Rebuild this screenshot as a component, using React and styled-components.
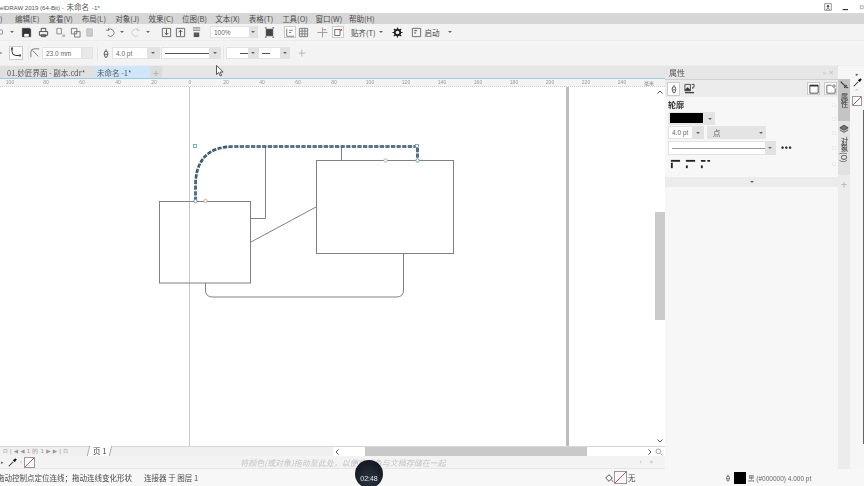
import React from 'react';
import styled, { createGlobalStyle } from 'styled-components';

const GlobalStyle = createGlobalStyle`
  html, body { margin: 0; padding: 0; background: #fff; }
  body { font-family: "Noto Sans CJK SC", "Noto Sans", "Liberation Sans", sans-serif; color: #4a4a4a; }
  * { box-sizing: border-box; }
`;

const Frame = styled.div`
  position: relative;
  width: 864px;
  height: 486px;
  overflow: hidden;
  display: flex;
  flex-direction: column;
  filter: blur(0.35px);
`;

const TitleBar = styled.div`
  height: 13px;
  background: #fff;
  display: flex;
  align-items: center;
  font-size: 8px;
  color: #555;
  white-space: nowrap;
`;
const TitleText = styled.span`
  flex: 1;
  font-family: "Liberation Sans", "Noto Sans CJK SC", sans-serif;
  font-size: 6.1px;
`;
const TitleName = styled.span`
  font-family: "Noto Sans CJK SC", sans-serif;
  font-size: 7.5px;
  margin: 0 3px 0 1px;
`;
const WinBtn = styled.span`
  width: ${p => p.$w}px;
  display: flex;
  justify-content: center;
  align-items: center;
  color: #333;
`;

const MenuBar = styled.div`
  height: 11px;
  background: #d6d6d6;
  display: flex;
  align-items: center;
  font-size: 7.5px;
  color: #4c4c4c;
  white-space: nowrap;
`;
const MenuItem = styled.span`
  width: 33.4px;
  flex: none;
  &:first-child { width: 15px; }
`;

const Toolbar = styled.div`
  height: ${p => p.$h}px;
  background: #f3f3f3;
  border-bottom: 1px solid #ececec;
  display: flex;
  align-items: center;
  flex: none;
`;
const Tool = styled.span`
  flex: none;
  margin-left: ${p => p.$ml || 0}px;
  width: ${p => p.$w || 12}px;
  height: ${p => p.$hh || 12}px;
  display: flex;
  align-items: center;
  justify-content: center;
  background: ${p => (p.$on ? '#fff' : 'transparent')};
  border: ${p => (p.$on ? '1px solid #ccc' : 'none')};
`;
const Caret = styled.span`
  flex: none;
  margin-left: ${p => p.$ml || 0}px;
  width: 0;
  height: 0;
  border-left: 2px solid transparent;
  border-right: 2px solid transparent;
  border-top: 2px solid #666;
`;
const Field = styled.div`
  flex: none;
  margin-left: ${p => p.$ml || 0}px;
  width: ${p => p.$w}px;
  height: ${p => p.$h || 12}px;
  background: ${p => p.$bg || '#fff'};
  border: 1px solid #e2e2e2;
  display: flex;
  align-items: center;
  font-family: "Liberation Sans", sans-serif;
  font-size: 6.5px;
  color: #666;
  padding-left: 3px;
  position: relative;
`;
const DropBtn = styled.span`
  position: absolute;
  right: 0;
  top: 0;
  bottom: 0;
  width: ${p => p.$w || 9}px;
  background: #e2e2e2;
  display: flex;
  align-items: center;
  justify-content: center;
`;
const LineSample = styled.span`
  display: block;
  width: ${p => p.$w}px;
  margin-left: ${p => p.$ml || 0}px;
  height: 1px;
  background: ${p => p.$c || '#555'};
`;
const BarLabel = styled.span`
  flex: none;
  margin-left: ${p => p.$ml || 0}px;
  font-size: 7.5px;
  color: #444;
`;
const Sep = styled.span`
  flex: none;
  width: 1px;
  height: 14px;
  margin-left: ${p => p.$ml || 0}px;
  background: #e6e6e6;
`;

const Body = styled.div`
  flex: 1;
  display: flex;
  min-height: 0;
`;
const Workspace = styled.div`
  width: 665px;
  flex: none;
  display: flex;
  flex-direction: column;
`;
const TabRow = styled.div`
  height: 13px;
  background: #e6e6e6;
  border-bottom: 1px solid #9fcbe0;
  display: flex;
  align-items: stretch;
  font-size: 7.5px;
  flex: none;
`;
const DocTab = styled.span`
  display: flex;
  align-items: center;
  width: ${p => p.$w}px;
  padding-left: ${p => p.$pl}px;
  background: ${p => (p.$active ? '#cfe5fa' : '#e0e0e0')};
  color: ${p => (p.$active ? '#5a5a5a' : '#555')};
  white-space: nowrap;
`;
const AddTab = styled.span`
  width: 12px;
  display: flex;
  align-items: center;
  justify-content: center;
  background: #dcdcdc;
  color: #aaa;
  font-size: 10px;
`;
const Ruler = styled.div`
  height: 8px;
  background: #f4f4f4;
  display: flex;
  flex: none;
  overflow: hidden;
  border-bottom: 1px dotted #d0d0d0;
`;
const RulerMark = styled.span`
  flex: none;
  width: 36px;
  font-family: "Liberation Sans", sans-serif;
  font-size: 5px;
  line-height: 7px;
  color: #999;
  text-align: center;
  &:first-child { margin-left: -8px; }
`;
const RulerUnit = styled.span`
  flex: none;
  margin-left: 4px;
  font-size: 5px;
  line-height: 7px;
  color: #888;
`;
const CanvasRow = styled.div`
  flex: 1;
  display: flex;
  min-height: 0;
`;
const Canvas = styled.div`
  position: relative;
  flex: 1;
  background: #fff;
  overflow: hidden;
`;
const Drawing = styled.svg`
  position: absolute;
  left: 0;
  top: 0;
`;
const VScroll = styled.div`
  width: 10px;
  flex: none;
  display: flex;
  flex-direction: column;
  align-items: stretch;
  background: #fff;
  padding: 3px 0;
`;
const VThumb = styled.div`
  height: 108px;
  margin-top: 118px;
  background: #cbcbcb;
  margin-bottom: auto;
`;
const ScrollArrow = styled.svg`
  display: block;
  margin: 0 auto;
  flex: none;
`;
const PageRow = styled.div`
  height: 10px;
  flex: none;
  display: flex;
  align-items: center;
  background: #f0f0f0;
  border-top: 1px solid #d8d8d8;
  font-size: 7px;
  color: #777;
`;
const PageNav = styled.span`
  width: 88px;
  flex: none;
  padding-left: 3px;
  letter-spacing: 2.2px;
  font-family: "DejaVu Sans", sans-serif;
  font-size: 5.5px;
  white-space: nowrap;
  color: #999;
`;
const PageTab = styled.span`
  flex: none;
  width: 23px;
  height: 10px;
  margin-top: -1px;
  background: #fff;
  border-left: 1px solid #aaa;
  border-right: 1px solid #aaa;
  transform: skewX(-14deg);
  text-align: center;
  font-size: 7.5px;
  line-height: 10px;
  color: #444;
`;
const PageTabLabel = styled.span`
  display: inline-block;
  transform: skewX(14deg);
`;
const PageGap = styled.span`
  flex: none;
  width: 222px;
`;
const HScroll = styled.div`
  flex: 1;
  height: 9px;
  background: #fff;
  display: flex;
  align-items: center;
`;
const HThumb = styled.span`
  width: 222px;
  height: 9px;
  margin-left: 26px;
  background: #c9c9c9;
`;
const HEnd = styled.span`
  margin-left: auto;
  display: flex;
  align-items: center;
  gap: 3px;
  padding-right: 2px;
`;
const ColorRow = styled.div`
  height: 13px;
  flex: none;
  display: flex;
  align-items: center;
  background: #f3f3f3;
  border-bottom: 1px solid #e6e6e6;
`;
const Hint = styled.span`
  margin-left: 205px;
  font-size: 8px;
  font-style: italic;
  color: #c4c4c4;
  white-space: nowrap;
  width: 396px;
`;
const Chevron = styled.span`
  flex: none;
  margin-left: ${p => p.$ml || 0}px;
  font-family: "DejaVu Sans", sans-serif;
  font-size: ${p => p.$fs || 7}px;
  line-height: ${p => p.$lh || 8}px;
  color: ${p => p.$c || '#bbb'};
`;
const NoneSwatch = styled.span`
  flex: none;
  margin-left: ${p => p.$ml || 0}px;
  width: ${p => p.$s}px;
  height: ${p => p.$s}px;
  border: 1px solid #999;
  background: linear-gradient(to top left, #fff 46%, #c9505a 46%, #c9505a 54%, #fff 54%);
`;

const Docker = styled.div`
  width: 173px;
  flex: none;
  background: #f7f7f7;
  display: flex;
  flex-direction: column;
`;
const DockHead = styled.div`
  height: 13px;
  background: #e6e6e6;
  display: flex;
  align-items: center;
  justify-content: space-between;
  padding: 0 2px 0 4px;
  font-size: 8px;
  color: #555;
`;
const DockHeadBtns = styled.span`
  color: #c0c0c0;
  font-family: "DejaVu Sans", sans-serif;
  font-size: 6.5px;
  letter-spacing: 2px;
`;
const DockTabs = styled.div`
  height: 18px;
  background: #ececec;
  border-top: 1px solid #cfcfcf;
  display: flex;
  align-items: center;
  padding: 0 0 0 2px;
`;
const DockSection = styled.div`
  display: flex;
  align-items: center;
  font-size: 8px;
  font-weight: 700;
  color: #333;
  margin: 2px 0 0 3px;
  height: 12px;
  line-height: 12px;
`;
const DockRow = styled.div`
  display: flex;
  align-items: center;
  margin: ${p => p.$mt}px 0 0 3px;
`;
const RowMark = styled.span`
  flex: none;
  margin: 0 2px 0 auto;
  width: 4px;
  height: 4px;
  border: 1px solid #ededed;
`;
const ColorPick = styled.span`
  width: 36px;
  height: 13px;
  background: #e8e8e8;
  padding: 1px 2px;
  display: block;
  flex: none;
`;
const ColorFill = styled.span`
  display: block;
  width: 33px;
  height: 10px;
  background: #000;
`;
const GreyDrop = styled.span`
  flex: none;
  width: ${p => p.$w || 11}px;
  height: 13px;
  margin-left: ${p => p.$ml || 0}px;
  background: #e4e4e4;
  display: flex;
  align-items: center;
  justify-content: ${p => (p.$w ? 'space-between' : 'center')};
  padding: ${p => (p.$w ? '0 3px 0 6px' : '0')};
  font-size: 7.5px;
  color: #666;
`;
const Dots = styled.span`
  margin-left: 5px;
  font-weight: 700;
  font-size: 9px;
  line-height: 8px;
  letter-spacing: 0.6px;
  color: #333;
  font-family: "Liberation Sans", sans-serif;
`;
const Collapse = styled.div`
  height: 10px;
  margin-top: 7px;
  background: #ececec;
  display: flex;
  align-items: center;
  justify-content: center;
`;

const TabStrip = styled.div`
  width: 12px;
  flex: none;
  background: #ececec;
  display: flex;
  flex-direction: column;
  align-items: center;
`;
const StripHead = styled.div`
  width: 12px;
  height: 13px;
  flex: none;
  background: #f6f6f6;
`;
const StripTab = styled.div`
  width: 12px;
  height: ${p => p.$h}px;
  background: ${p => (p.$on ? '#c4c4c4' : '#e2e2e2')};
  display: flex;
  flex-direction: column;
  align-items: center;
  padding-top: ${p => p.$pt || 0}px;
`;
const StripLabel = styled.span`
  writing-mode: vertical-rl;
  font-size: 7.5px;
  line-height: 12px;
  color: #333;
  white-space: nowrap;
  margin-top: 3px;
`;
const StripPlus = styled.span`
  font-size: 11px;
  line-height: 12px;
  margin-top: 3px;
  color: #b5b5b5;
`;
const Palette = styled.div`
  position: relative;
  width: 14px;
  flex: none;
  background: #f6f6f6;
  display: flex;
  flex-direction: column;
  align-items: center;
  padding-top: 5px;
  &::after {
    content: '';
    position: absolute;
    right: 0;
    top: 44px;
    bottom: 25px;
    width: 1px;
    background: #666;
  }
`;

const StatusBar = styled.div`
  height: 17px;
  flex: none;
  background: #f7f7f7;
  display: flex;
  align-items: center;
  font-size: 7.5px;
  color: #4a4a4a;
  white-space: nowrap;
`;
const StatusText = styled.span`
  flex: none;
  width: ${p => p.$w}px;
  margin-left: ${p => p.$ml || 0}px;
`;
const StatusSwatch = styled.span`
  flex: none;
  width: 12px;
  height: 12px;
  margin-left: 2px;
  background: #000;
`;
const StatusInfo = styled.span`
  margin-left: 2px;
  font-family: "Liberation Sans", "Noto Sans CJK SC", sans-serif;
  font-size: 6.5px;
  color: #666;
`;

const Timer = styled.div`
  position: absolute;
  left: 355px;
  top: 460px;
  width: 28px;
  height: 28px;
  border-radius: 50%;
  background: radial-gradient(circle at 50% 70%, #2c3442, #151a24 70%);
  color: #dfe4ea;
  font-family: "Liberation Sans", sans-serif;
  font-size: 7px;
  text-align: center;
  line-height: 38px;
`;
const Cursor = styled.svg`
  position: absolute;
  left: 216px;
  top: 65px;
`;

const Ico = ({ s = 11, children }) => (
  <svg width={s} height={s} viewBox="0 0 12 12" fill="none" stroke="#444" strokeWidth="1">
    {children}
  </svg>
);

const Pen = ({ s = 11 }) => (
  <Ico s={s}>
    <path d="M6 1v2M4.5 3.5h3l.8 3-1.3 4h-2l-1.3-4z" />
    <path d="M4.2 7h3.6" />
  </Ico>
);
const Dropper = () => (
  <Ico s={9}>
    <path d="M1 11l6-6" stroke="#333" strokeWidth="1.4" />
    <path d="M7 3l2 2 2-3-1-1z" fill="#111" stroke="#111" />
  </Ico>
);
const Down = () => <Caret />;

const rulerMarks = [100, 80, 60, 40, 20, 0, 20, 40, 60, 80, 100, 120, 140, 160, 180, 200, 220, 240];
const menus = [')', '编辑(E)', '查看(V)', '布局(L)', '对象(J)', '效果(C)', '位图(B)', '文本(X)', '表格(T)', '工具(O)', '窗口(W)', '帮助(H)'];

const StandardBar = () => (
  <Toolbar $h={17}>
    <Tool $w={6}><Ico s={10}><path d="M-3 2h7l1 1v7h-8z" /></Ico></Tool>
    <Caret $ml={4} />
    <Tool $ml={6}><Ico><path d="M1.5 1.5h8l1 1v8h-9z" fill="#333" /><path d="M3.5 7.5h5v3h-5z" fill="#fff" stroke="none" /></Ico></Tool>
    <Tool $ml={5}><Ico><path d="M3.5 5V1.5h5V5M1.5 5h9v4h-9zM3.5 8.5h5v2h-5z" /></Ico></Tool>
    <Tool $ml={5}><Ico><path d="M2 1.5h5v6H2z" stroke="#888" /><path d="M8 8h3v3H8z" fill="#bbb" stroke="none" /></Ico></Tool>
    <Tool $ml={3}><Ico><path d="M1.5 1.5h6v6h-6zM5 5h6v6H5z" stroke="#777" /></Ico></Tool>
    <Tool $ml={3}><Ico><path d="M2 2h6v8H2z" fill="#ccc" stroke="#bbb" /></Ico></Tool>
    <Tool $ml={8}><Ico><path d="M3 3.5A4 4 0 1 1 3 9" stroke="#777" /><path d="M1 3.5h3V1" stroke="#777" /></Ico></Tool>
    <Caret $ml={4} />
    <Tool $ml={5}><Ico><path d="M9 3.5A4 4 0 1 0 9 9" stroke="#ccc" /><path d="M11 3.5H8V1" stroke="#ccc" /></Ico></Tool>
    <Caret $ml={5} />
    <Tool $ml={10}><Ico><path d="M1.5 1.5h9v9h-9z" stroke="#666" /><path d="M6 2.5v6M4 6.5l2 2 2-2" /></Ico></Tool>
    <Tool $ml={2}><Ico><path d="M1.5 1.5h9v9h-9z" stroke="#666" /><path d="M6 9.5v-6M4 5.5l2-2 2 2" /></Ico></Tool>
    <Tool $ml={4}><Ico><path d="M2 1h8M2 3.5h8" stroke="#666" /><path d="M3 6h6v5H3z" fill="#555" stroke="none" /></Ico></Tool>
    <Field $ml={8} $w={48} $h={12}>100%<DropBtn $w={8}><Down /></DropBtn></Field>
    <Tool $ml={5}><Ico><path d="M2.5 2.5h7v7h-7z" fill="#444" /><path d="M1 1h2M9 1h2M1 11h2M9 11h2" /></Ico></Tool>
    <Tool $ml={9} $on><Ico s={9}><path d="M1 1v10h10M4 3h5M4 6h3" stroke="#555" /></Ico></Tool>
    <Tool $ml={1}><Ico><path d="M1.5 1.5h9v9h-9zM1.5 4.5h9M1.5 7.5h9M4.5 1.5v9M7.5 1.5v9" stroke="#777" /></Ico></Tool>
    <Tool $ml={7}><Ico><path d="M6 .5v11M.5 6h11" stroke="#999" /><path d="M7 3h3" stroke="#c66" /></Ico></Tool>
    <Tool $ml={4} $on><Ico s={9}><path d="M1 2h7v8H1z" /><path d="M8 1l3 3M11 1L8 4" stroke="#c33" /></Ico></Tool>
    <BarLabel $ml={7}>贴齐(T)</BarLabel>
    <Caret $ml={3} />
    <Tool $ml={9}><Ico><circle cx="6" cy="6" r="3" strokeWidth="2" stroke="#222" /><path d="M6 .5v2M6 9.5v2M.5 6h2M9.5 6h2M2 2l1.4 1.4M8.6 8.6L10 10M10 2L8.6 3.4M3.4 8.6L2 10" stroke="#222" strokeWidth="1.2" /></Ico></Tool>
    <Tool $ml={7}><Ico><path d="M1.5 1.5h9v9h-9z" stroke="#666" /><path d="M3.5 4h3M3.5 6.5h2" /></Ico></Tool>
    <BarLabel $ml={2}>启动</BarLabel>
    <Caret $ml={8} />
  </Toolbar>
);

const PropertyBar = () => (
  <Toolbar $h={25}>
    <Tool $w={4}><Ico s={6}><path d="M0 6h5" strokeWidth="3" stroke="#555" /></Ico></Tool>
    <Tool $ml={5} $w={14} $hh={14} $on><Ico s={12}><path d="M2 1.5v3q0 4 4 4h3" stroke="#333" /><path d="M1 .5h2v2H1zM9 7.5h2v2H9z" fill="#357" stroke="none" /></Ico></Tool>
    <Sep $ml={5} />
    <Tool $ml={1} $w={10}><Ico s={10}><path d="M1 11V5q0-4 4-4h6M3 3l7 7" stroke="#666" /></Ico></Tool>
    <Field $ml={2} $w={40}>23.0 mm</Field>
    <Field $w={11} $bg="#e9e9e9" />
    <Sep $ml={4} />
    <Tool $ml={3} $w={10}><Pen /></Tool>
    <Field $ml={1} $w={48}>4.0 pt<DropBtn $w={12}><Down /></DropBtn></Field>
    <Field $ml={1} $w={60}><LineSample $w={45} /><DropBtn $w={11}><Down /></DropBtn></Field>
    <Sep $ml={2} />
    <Field $ml={2} $w={32}><LineSample $w={8} $ml={10} /><DropBtn $w={9}><Down /></DropBtn></Field>
    <Field $w={32}><LineSample $w={8} /><DropBtn $w={9}><Down /></DropBtn></Field>
    <Tool $ml={6}><Ico s={9}><path d="M5 1v9M1 5.5h9" stroke="#aaa" /></Ico></Tool>
  </Toolbar>
);

const dashedPath = 'M195.5 201V186Q195.5 146.5 234 146.5H417.5V160';

const DrawingLayer = () => (
  <Drawing width="655" height="360" viewBox="0 87 655 360" fill="none">
    <path d="M189.5 87V447" stroke="#c8c8c8" />
    <rect x="566" y="87" width="3" height="360" fill="#bdbdbd" />
    <g stroke="#808080" strokeWidth="1">
      <rect x="159.5" y="201.5" width="91" height="81.5" />
      <rect x="316.5" y="160.5" width="137" height="93" />
      <path d="M251 218.5H265.5V147" />
      <path d="M251 242L316 207" />
      <path d="M341.5 160V147" />
      <path d="M205.5 283V290Q205.5 297 212.5 297H396.5Q403.5 297 403.5 290V254" />
    </g>
    <path d={dashedPath} stroke="#2f4558" strokeWidth="2.6" strokeDasharray="4.2 1.4" />
    <path d={dashedPath} stroke="#8fc0dc" strokeWidth="0.4" />
    <g fill="#fff" strokeWidth="0.8">
      <rect x="193.5" y="144.5" width="3" height="3" stroke="#5aa0c8" />
      <rect x="415.5" y="144.5" width="3" height="3" stroke="#5aa0c8" />
      <circle cx="195.5" cy="201" r="1.7" stroke="#4d8fb5" />
      <circle cx="417.5" cy="160.5" r="1.7" stroke="#4d8fb5" />
      <circle cx="205.5" cy="201" r="1.7" stroke="#cf8f95" />
      <circle cx="385.5" cy="160.5" r="1.7" stroke="#cf8f95" />
    </g>
  </Drawing>
);

const WorkspacePane = () => (
  <Workspace>
    <TabRow>
      <DocTab $w={95} $pl={7}>01.妙匠界面 - 副本.cdr*</DocTab>
      <DocTab $w={55} $pl={2} $active>未命名 -1*</DocTab>
      <AddTab>+</AddTab>
    </TabRow>
    <Ruler>
      {rulerMarks.map((m, i) => <RulerMark key={i}>{m}</RulerMark>)}
      <RulerUnit>毫米</RulerUnit>
    </Ruler>
    <CanvasRow>
      <Canvas><DrawingLayer /></Canvas>
      <VScroll>
        <ScrollArrow width="6" height="4" viewBox="0 0 6 4"><path d="M.5 3.5L3 1l2.5 2.5" fill="none" stroke="#555" /></ScrollArrow>
        <VThumb />
        <ScrollArrow width="6" height="4" viewBox="0 0 6 4"><path d="M.5.5L3 3 5.5.5" fill="none" stroke="#555" /></ScrollArrow>
      </VScroll>
    </CanvasRow>
    <PageRow>
      <PageNav>⊡|◀◀1的1▶▶|⊡</PageNav>
      <PageTab><PageTabLabel>页 1</PageTabLabel></PageTab>
      <PageGap />
      <HScroll>
        <ScrollArrow width="4" height="6" viewBox="0 0 4 6" style={{ margin: '0 0 0 2px' }}><path d="M3.5.5L1 3l2.5 2.5" fill="none" stroke="#555" /></ScrollArrow>
        <HThumb />
        <HEnd>
          <ScrollArrow width="4" height="6" viewBox="0 0 4 6"><path d="M.5.5L3 3 .5 5.5" fill="none" stroke="#555" /></ScrollArrow>
          <Ico s={8}><circle cx="5" cy="5" r="3.5" stroke="#777" /><path d="M8 8l3 3" stroke="#777" /></Ico>
        </HEnd>
      </HScroll>
    </PageRow>
    <ColorRow>
      <Chevron $ml={1} $c="#666" $fs={5}>▸</Chevron>
      <Tool $ml={3} $w={11}><Dropper /></Tool>
      <Chevron $ml={2}>‹</Chevron>
      <NoneSwatch $ml={2} $s={11} />
      <Hint>将颜色(或对象)拖动至此处，以便将颜色与文档存储在一起</Hint>
      <Chevron $ml={3}>›</Chevron>
      <Chevron $ml={7}>»</Chevron>
    </ColorRow>
  </Workspace>
);

const PropsDocker = () => (
  <Docker>
    <DockHead>属性<DockHeadBtns>»✕</DockHeadBtns></DockHead>
    <DockTabs>
      <Tool $w={13} $hh={14} $on><Pen s={10} /></Tool>
      <Tool $ml={3} $w={12}><Ico><path d="M1 1.5h6v7H1z" /><path d="M1 8l3-3 3 3z" fill="#333" /><path d="M8.5 1.5h2.5v3H9.5v2" /><path d="M1 10.5h10" strokeWidth="1.5" /></Ico></Tool>
      <Tool $ml={112} $w={13} $hh={13} $on><Ico s={10}><path d="M1 1.5h10v9.5H1z" stroke="#333" /><path d="M1 2h10" strokeWidth="2" stroke="#333" /></Ico></Tool>
      <Tool $ml={4} $w={13} $hh={13} $on><Ico s={10}><path d="M1 1.5h6M1 1.5v9.5h10V5" stroke="#555" /><circle cx="9.5" cy="2.5" r="1.5" stroke="#555" /></Ico></Tool>
    </DockTabs>
    <DockSection>轮廓<RowMark /></DockSection>
    <DockRow $mt={1}>
      <ColorPick><ColorFill /></ColorPick>
      <GreyDrop><Down /></GreyDrop>
      <RowMark />
    </DockRow>
    <DockRow $mt={1}>
      <Field $w={36} $h={13}>4.0 pt<DropBtn $w={11}><Down /></DropBtn></Field>
      <GreyDrop $ml={3} $w={59}>点<Down /></GreyDrop>
      <RowMark />
    </DockRow>
    <DockRow $mt={2}>
      <Field $w={108} $h={14}><LineSample $w={93} $c="#999" /><DropBtn $w={10}><Down /></DropBtn></Field>
      <Dots>•••</Dots>
      <RowMark />
    </DockRow>
    <DockRow $mt={3}>
      <Tool $w={14} $hh={12}><Ico s={11}><path d="M1 2h10" strokeWidth="2" stroke="#222" /><path d="M2 4v6" strokeWidth="2" stroke="#222" /></Ico></Tool>
      <Tool $ml={1} $w={14} $hh={12}><Ico s={11}><path d="M1 2h10" strokeWidth="2" stroke="#222" /><path d="M2 7v3" strokeWidth="2" stroke="#222" /></Ico></Tool>
      <Tool $ml={1} $w={14} $hh={12}><Ico s={11}><path d="M1 2h5M8 2h3" strokeWidth="2" stroke="#222" /><path d="M2 7v3" strokeWidth="2" stroke="#222" /></Ico></Tool>
      <RowMark />
    </DockRow>
    <Collapse><Down /></Collapse>
  </Docker>
);

const RightStrip = () => (
  <TabStrip>
    <StripHead />
    <StripTab $h={42} $on $pt={1}>
      <Ico s={10}><path d="M2 2l6 6M6 9l2-1 1-2" stroke="#333" strokeWidth="1.3" /><path d="M8 9h3" stroke="#555" strokeWidth="1.5" /></Ico>
      <StripLabel>属性</StripLabel>
    </StripTab>
    <StripTab $h={54} $pt={3}>
      <Ico s={10}><path d="M6 1.5l5 3-5 3-5-3z" stroke="#333" fill="#777" /><path d="M1 7l5 3 5-3" stroke="#333" /></Ico>
      <StripLabel>对象(O)</StripLabel>
    </StripTab>
    <StripPlus>+</StripPlus>
  </TabStrip>
);

const App = () => (
  <>
    <GlobalStyle />
    <Frame>
      <TitleBar>
        <TitleText>elDRAW 2019 (64-Bit) - <TitleName>未命名</TitleName>-1*</TitleText>
        <WinBtn $w={10}><Ico s={8}><path d="M1 1h10v10H1z" stroke="#666" /><circle cx="6" cy="5" r="1.5" fill="#444" /><path d="M3 10q3-4 6 0" /></Ico></WinBtn>
        <WinBtn $w={26}><Ico s={8}><path d="M1 10h8" stroke="#111" strokeWidth="1.5" /></Ico></WinBtn>
        <WinBtn $w={5}><Ico s={8}><path d="M3 3h7v7H3z" /></Ico></WinBtn>
      </TitleBar>
      <MenuBar>
        {menus.map(m => <MenuItem key={m}>{m}</MenuItem>)}
      </MenuBar>
      <StandardBar />
      <PropertyBar />
      <Body>
        <WorkspacePane />
        <PropsDocker />
        <RightStrip />
        <Palette>
          <Chevron $c="#555" $fs={5} $lh={6}>▸</Chevron>
          <Tool $w={10} $hh={11}><Dropper /></Tool>
          <Chevron>⌃</Chevron>
          <NoneSwatch $s={10} />
        </Palette>
      </Body>
      <StatusBar>
        <StatusText $ml={-3} $w={147}>拖动控制点定位连线；拖动连线变化形状</StatusText>
        <StatusText $w={460}>连接器 于 图层 1</StatusText>
        <Tool $w={10}><Ico s={10}><path d="M2 6l4-4 4 4-4 4z" stroke="#333" /><path d="M9 8l2 3" stroke="#c33" /></Ico></Tool>
        <NoneSwatch $s={13} />
        <StatusText $ml={1} $w={96}>无</StatusText>
        <Tool $w={8}><Pen s={10} /></Tool>
        <StatusSwatch />
        <StatusInfo>黑 (#000000)  4.000 pt</StatusInfo>
      </StatusBar>
      <Timer>02:48</Timer>
      <Cursor width="8" height="12" viewBox="0 0 8 12">
        <path d="M.5.5v9l2.2-2 1.6 3.5 1.4-.6L4.2 7h3z" fill="#fff" stroke="#333" strokeWidth=".8" />
      </Cursor>
    </Frame>
  </>
);

export default App;
